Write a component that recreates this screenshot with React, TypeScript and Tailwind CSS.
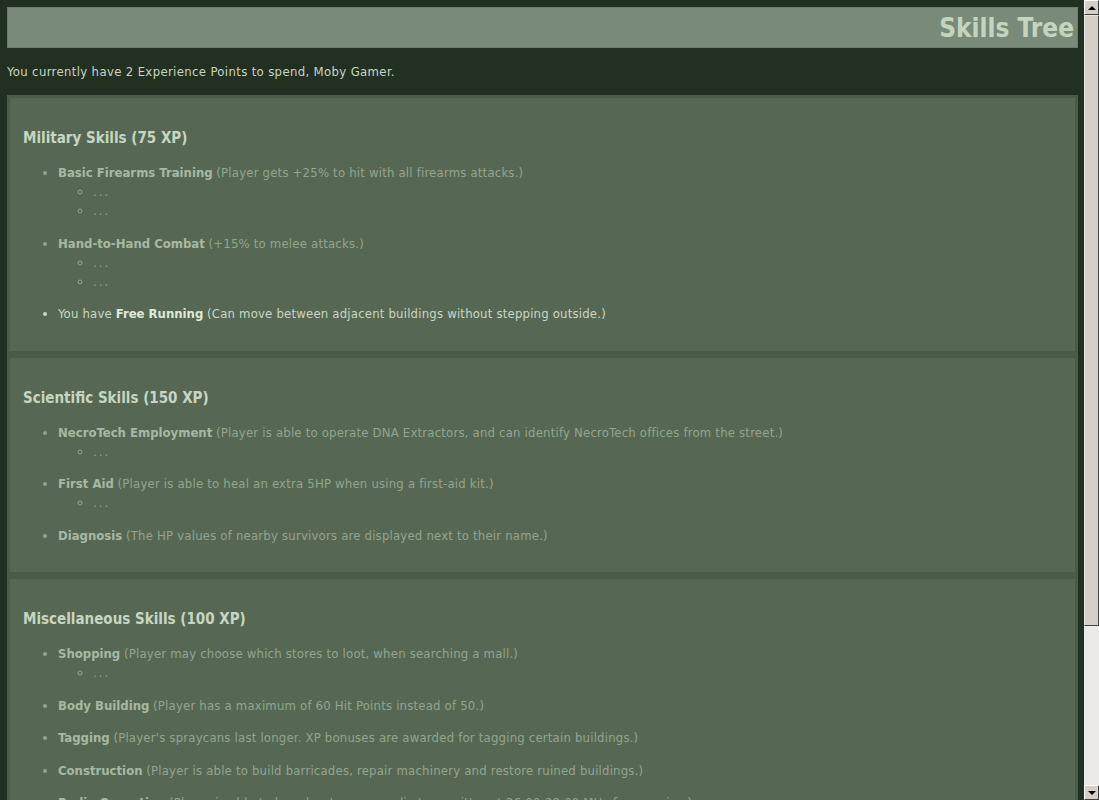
import React from "react";

type Item = { name: string; desc: string; subs?: number; have?: boolean };
type Section = { title: string; items: Item[] };

const sections: Section[] = [
  {
    title: "Military Skills (75 XP)",
    items: [
      { name: "Basic Firearms Training", desc: "(Player gets +25% to hit with all firearms attacks.)", subs: 2 },
      { name: "Hand-to-Hand Combat", desc: "(+15% to melee attacks.)", subs: 2 },
      { name: "Free Running", desc: "(Can move between adjacent buildings without stepping outside.)", have: true },
    ],
  },
  {
    title: "Scientific Skills (150 XP)",
    items: [
      { name: "NecroTech Employment", desc: "(Player is able to operate DNA Extractors, and can identify NecroTech offices from the street.)", subs: 1 },
      { name: "First Aid", desc: "(Player is able to heal an extra 5HP when using a first-aid kit.)", subs: 1 },
      { name: "Diagnosis", desc: "(The HP values of nearby survivors are displayed next to their name.)" },
    ],
  },
  {
    title: "Miscellaneous Skills (100 XP)",
    items: [
      { name: "Shopping", desc: "(Player may choose which stores to loot, when searching a mall.)", subs: 1 },
      { name: "Body Building", desc: "(Player has a maximum of 60 Hit Points instead of 50.)" },
      { name: "Tagging", desc: "(Player's spraycans last longer. XP bonuses are awarded for tagging certain buildings.)" },
      { name: "Construction", desc: "(Player is able to build barricades, repair machinery and restore ruined buildings.)" },
      { name: "Radio Operation", desc: "(Player is able to broadcast on any radio transmitter at 26.00-28.00 MHz frequencies.)" },
      { name: "Bar Shopping", desc: "(...)" },
    ],
  },
];

const font = { fontFamily: '"DejaVu Sans Condensed", "DejaVu Sans", sans-serif' };

function SkillItem({ item }: { item: Item }) {
  return (
    <li className={`mb-[13.5px] ${item.have ? "text-[#cbd6c7] marker:text-[#cbd6c7]" : "text-[#94a491] marker:text-[#94a491]"}`}>
      {item.have ? (
        <>
          <span className="tracking-[0.2px]">You have</span> <b className="text-[#dfe8dc]">{item.name}</b>{" "}
          <span className="tracking-[0.2px]">{item.desc}</span>
        </>
      ) : (
        <>
          <b className="text-[#a8b8a4]">{item.name}</b> <span className="tracking-[0.2px]">{item.desc}</span>
        </>
      )}
      {item.subs ? (
        <ul className="list-[circle] pl-[35px] text-[#94a491] marker:text-[#94a491]">
          {Array.from({ length: item.subs }).map((_, i) => (
            <li key={i} className="tracking-[2px]">...</li>
          ))}
        </ul>
      ) : null}
    </li>
  );
}

function Scrollbar() {
  return (
    <div className="flex h-[800px] w-[15px] shrink-0 flex-col bg-[#d4d0c8]">
      <div className="flex h-[15px] w-[15px] items-center justify-center border border-t-white border-l-white border-r-[#404040] border-b-[#404040] bg-[#d4d0c8]">
        <div className="h-0 w-0 border-x-[4px] border-b-[4px] border-x-transparent border-b-black" />
      </div>
      <div className="h-[611px] w-[15px] border border-t-[#e8e6e0] border-l-[#e8e6e0] border-r-[#404040] border-b-[#404040] bg-[#d4d0c8]" />
      <div className="flex-1 bg-[#ebeae6]" />
      <div className="flex h-[15px] w-[15px] items-center justify-center border border-t-white border-l-white border-r-[#404040] border-b-[#404040] bg-[#d4d0c8]">
        <div className="h-0 w-0 border-x-[4px] border-t-[4px] border-x-transparent border-t-black" />
      </div>
    </div>
  );
}

export default function App() {
  return (
    <div className="flex h-[800px] w-[1099px] overflow-hidden bg-[#223021]" style={font}>
      <div className="h-[800px] flex-1 overflow-hidden pl-[7px] pr-[6px] pt-[7px]">
        <div className="flex h-[41px] items-center justify-end border border-[#6c7e6b] bg-[#798b78] pr-[3px]">
          <h1 className="text-[26px] font-bold leading-none text-[#c3d5bf]">Skills Tree</h1>
        </div>
        <p className="mt-[16px] text-[13px] leading-[15px] tracking-[0.35px] text-[#c9d3c5]">
          You currently have 2 Experience Points to spend, Moby Gamer.
        </p>
        <div className="mt-[16px] flex flex-col gap-[7px] border-[3px] border-[#4a5b48] bg-[#4a5b48]">
          {sections.map((s) => (
            <div key={s.title} className="bg-[#566853] pl-[13px] pr-[13px] pt-[30px] pb-[14px]">
              <h2 className="text-[15px] font-bold leading-[20px] text-[#c6d6c2]">{s.title}</h2>
              <ul className="mt-[15px] list-disc pl-[35px] text-[13px] leading-[19px]">
                {s.items.map((it) => (
                  <SkillItem key={it.name} item={it} />
                ))}
              </ul>
            </div>
          ))}
        </div>
      </div>
      <Scrollbar />
    </div>
  );
}
